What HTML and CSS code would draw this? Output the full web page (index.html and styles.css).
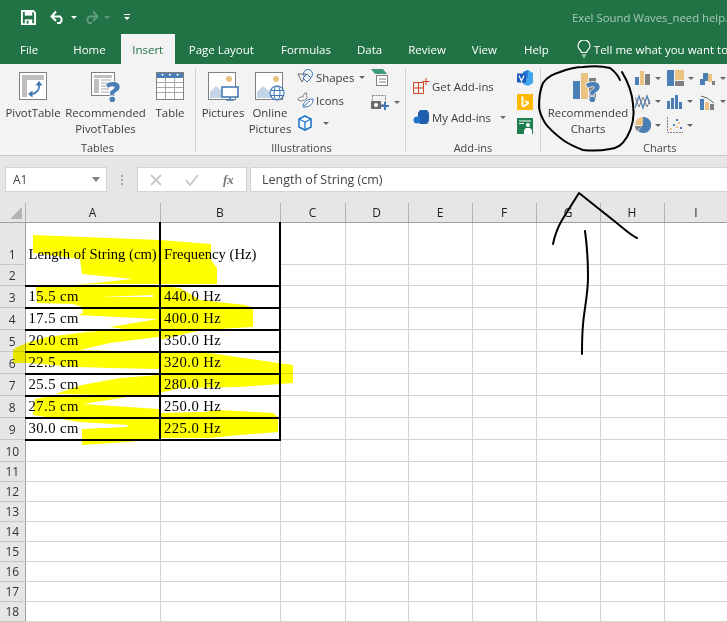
FILE: index.html
```html
<!DOCTYPE html>
<html lang="en">
<head>
<meta charset="utf-8">
<title>Exel Sound Waves_need help</title>
<link rel="stylesheet" href="styles.css">
</head>
<body>
<div class="app">
  <header class="titlebar">
    <svg class="qa-save" width="15" height="15" viewBox="0 0 16 16"><path d="M1 1h12l2 2v12H1z" fill="none" stroke="#fff" stroke-width="2"/><rect x="4" y="1" width="8" height="5" fill="#fff"/><rect x="4" y="10" width="8" height="5" fill="#fff"/><rect x="6" y="11.5" width="2" height="3" fill="#217346"/></svg>
    <svg class="qa-undo" width="16" height="14" viewBox="0 0 16 14"><path d="M2 6.500h8a4 4 0 0 1 0 6.500H7M6 1.500L1.500 6.500l4.500 4.500" fill="none" stroke="#fff" stroke-width="2"/></svg>
    <span class="qa-caret"></span>
    <svg class="qa-redo" width="16" height="14" viewBox="0 0 16 14"><path d="M14 6.500H6a4 4 0 0 0 0 6.500h3M10 1.500l4.500 5-4.500 4.500" fill="none" stroke="#5f9c7c" stroke-width="2"/></svg>
    <span class="qa-caret qa-caret-dim"></span>
    <span class="qa-custom"></span>
    <span class="doc-title">Exel Sound Waves_need help.</span>
  </header>

  <nav class="tabs">
    <span class="tab tab-file">File</span>
    <span class="tab tab-home">Home</span>
    <span class="tab tab-active">Insert</span>
    <span class="tab tab-layout">Page Layout</span>
    <span class="tab tab-formulas">Formulas</span>
    <span class="tab tab-data">Data</span>
    <span class="tab tab-review">Review</span>
    <span class="tab tab-view">View</span>
    <span class="tab tab-help">Help</span>
    <svg class="bulb" width="14" height="18" viewBox="0 0 14 18"><path d="M4.500 12.500C4.300 10 1 9 1 6a6 6 0 0 1 12 0c0 3-3.300 4-3.500 6.500zM5 15h4M5.800 17h2.400" fill="none" stroke="#fff" stroke-width="1.200"/></svg>
    <span class="tab tell">Tell me what you want to do</span>
  </nav>

  <section class="ribbon">
    <div class="group group-tables">
      <div class="group-body">
        <div class="big big-pivot">
          <svg width="28" height="28" viewBox="0 0 28 28"><rect x=".5" y=".5" width="27" height="27" fill="#fff" stroke="#808080"/><rect x="3" y="3" width="22" height="5" fill="#bfbfbf"/><rect x="3" y="8" width="5" height="17" fill="#bfbfbf"/><path d="M20 13c1 4-2 8-7 9" fill="none" stroke="#3f76b5" stroke-width="1.700"/><path d="M20 9l-3.500 4.500h7zM9 22l4.500-3.500v7z" fill="#3f76b5"/></svg>
          <span>PivotTable</span>
        </div>
        <div class="big big-recpivot">
          <svg width="30" height="28" viewBox="0 0 30 28"><rect x=".5" y=".5" width="23" height="23" fill="#fff" stroke="#808080"/><rect x="3" y="3" width="18" height="3" fill="#bfbfbf"/><rect x="3" y="7" width="5" height="14" fill="#bfbfbf"/><path d="M10 8h10M10 11h10M10 14h9M10 17h8M10 20h8" stroke="#a6a6a6"/><text class="qmark" x="15" y="30">?</text></svg>
          <span>Recommended</span>
          <span>PivotTables</span>
        </div>
        <div class="big big-table">
          <svg width="28" height="28" viewBox="0 0 28 28"><rect x=".5" y=".5" width="27" height="27" fill="#fff" stroke="#808080"/><rect x="1" y="1" width="26" height="5" fill="#4a7eb5"/><path d="M5 2h3l-1.500 2zM12.500 2h3L14 4zM20 2h3l-1.500 2z" fill="#fff"/><path d="M1 10.500h26M1 15.500h26M1 20.500h26M9.500 6v21M18.500 6v21" stroke="#a6a6a6"/></svg>
          <span>Table</span>
        </div>
      </div>
      <div class="group-label">Tables</div>
    </div>
    <div class="sep"></div>

    <div class="group group-illus">
      <div class="group-body">
        <div class="big big-pic">
          <svg width="30" height="28" viewBox="0 0 30 28"><rect x=".5" y=".5" width="27" height="27" fill="#fff" stroke="#808080"/><circle cx="21" cy="7" r="3" fill="#eac282"/><path d="M2 26V20l6-6 6 5 5-3v10z" fill="#c5d5e8"/><rect x="14" y="15" width="16" height="10" fill="#fff" stroke="#3f76b5" stroke-width="1.500"/><path d="M22 25v3M18 28h8" stroke="#3f76b5" stroke-width="1.500"/></svg>
          <span>Pictures</span>
        </div>
        <div class="big big-online">
          <svg width="30" height="28" viewBox="0 0 30 28"><rect x=".5" y=".5" width="27" height="27" fill="#fff" stroke="#808080"/><circle cx="21" cy="7" r="3" fill="#eac282"/><path d="M2 26V20l6-6 6 5 5-3v10z" fill="#c5d5e8"/><circle cx="22" cy="21" r="7" fill="#fff" stroke="#3f76b5" stroke-width="1.200"/><ellipse cx="22" cy="21" rx="3" ry="7" fill="none" stroke="#3f76b5"/><path d="M15.500 18.500h13M15.500 23.500h13" stroke="#3f76b5"/></svg>
          <span>Online</span>
          <span>Pictures</span>
        </div>
        <div class="small-col col-shapes">
          <div class="small">
            <svg width="17" height="16" viewBox="0 0 17 16"><path d="M1 5h8l-4 8z" fill="none" stroke="#6b6b6b"/><circle cx="11" cy="5" r="4.500" fill="none" stroke="#3f76b5"/><path d="M10 5l4 4-4 4-4-4z" fill="#f3f3f3" stroke="#3f76b5"/></svg>
            <span>Shapes</span><i class="caret"></i>
          </div>
          <div class="small">
            <svg width="17" height="16" viewBox="0 0 17 16"><path d="M1 8c0-3 3-3 5-3 0-2 1-4 4-4-1 2 0 3 0 5-1 2-4 3-6 3z" fill="none" stroke="#808080"/><path d="M6 15c0-5 4-8 10-8 0 5-3 8-8 8z" fill="#fff" stroke="#3f76b5"/><path d="M7 14l6-5" stroke="#3f76b5"/></svg>
            <span>Icons</span>
          </div>
          <div class="small small-3d">
            <svg width="17" height="16" viewBox="0 0 17 16"><path d="M8 1l6 3v8l-6 3-6-3V4z" fill="#fff" stroke="#1f76c8" stroke-width="1.600"/><path d="M2 4l6 3 6-3M8 7v8" fill="none" stroke="#1f76c8" stroke-width="1.300"/></svg>
            <i class="caret caret-3d"></i>
          </div>
        </div>
        <div class="small-col col-art">
          <div class="small">
            <svg width="17" height="18" viewBox="0 0 17 18"><path d="M0 0h12l4 5H4z" fill="#3f9a78"/><rect x="5.500" y="6.500" width="11" height="10" fill="#fff" stroke="#808080"/><path d="M8 10h7M8 13h7" stroke="#808080"/></svg>
          </div>
          <div class="small small-shot">
            <svg width="18" height="16" viewBox="0 0 18 16"><rect x="1.500" y="1.500" width="13" height="9" fill="none" stroke="#808080" stroke-dasharray="2 1"/><rect x="0" y="7" width="10" height="8" fill="#6b6b6b"/><circle cx="5" cy="11" r="2" fill="#fff"/><path d="M14 8v8M10 12h8" stroke="#3f76b5" stroke-width="2"/></svg>
            <i class="caret"></i>
          </div>
        </div>
      </div>
      <div class="group-label group-label-illus">Illustrations</div>
    </div>
    <div class="sep"></div>

    <div class="group group-addins">
      <div class="group-body">
        <div class="addin-col">
          <div class="small">
            <svg width="17" height="16" viewBox="0 0 17 16"><path d="M.5 4.500h10v11H.5zM.5 10h10M5.500 4.500v11M13 0v7M9.500 3.500h7" fill="none" stroke="#d04423"/></svg>
            <span>Get Add-ins</span>
          </div>
          <div class="small">
            <svg width="17" height="16" viewBox="0 0 17 16"><path d="M7 1h7l2 3v8l-2 3H7l-2-3V4z" fill="#1f5fae"/><circle cx="4" cy="11" r="3.500" fill="#1f76c8"/></svg>
            <span>My Add-ins</span><i class="caret caret-my"></i>
          </div>
        </div>
        <div class="small-col col-store">
          <div class="small">
            <svg width="16" height="16" viewBox="0 0 16 16"><path d="M6 2l5-2 5 3v10l-5 3-5-2z" fill="#41a5ee"/><path d="M6 2l5-2v8H6z" fill="#2b7cd3"/><rect y="3.500" width="9" height="9" fill="#185abd"/><path d="M2 5.500l2.500 5.500 2.500-5.500" fill="none" stroke="#fff" stroke-width="1.200"/></svg>
          </div>
          <div class="small">
            <svg width="16" height="16" viewBox="0 0 16 16"><rect width="16" height="16" fill="#ffb900"/><path d="M4.500 2v10l2 1.500 5.500-3.500v-2L7.500 6l1 2.500 1.500.7-3.500 2V3z" fill="#fff"/></svg>
          </div>
          <div class="small">
            <svg width="16" height="16" viewBox="0 0 16 16"><rect width="16" height="16" fill="#1d7f50"/><path d="M2 3h12M2 5.500h5" stroke="#fff"/><circle cx="11" cy="7" r="2" fill="#fff"/><path d="M7 16v-4l2-2h4l2 2v4z" fill="#fff"/></svg>
          </div>
        </div>
      </div>
      <div class="group-label group-label-addins">Add-ins</div>
    </div>
    <div class="sep"></div>

    <div class="group group-charts">
      <div class="group-body">
        <div class="big big-recchart">
          <svg width="30" height="28" viewBox="0 0 30 28"><rect x="0" y="9" width="7" height="18" fill="#4a7eb5"/><rect x="8" y="1" width="7" height="26" fill="#eac282"/><rect x="16" y="6" width="7" height="21" fill="#808080"/><text class="qmark" x="13" y="30">?</text></svg>
          <span>Recommended</span>
          <span>Charts</span>
        </div>
        <div class="chart-grid">
          <div class="small"><svg width="16" height="16" viewBox="0 0 16 16"><rect y="7" width="4" height="8" fill="#4a7eb5"/><rect x="5" y="1" width="4" height="14" fill="#eac282"/><rect x="10" y="4" width="5" height="11" fill="#808080"/></svg><i class="caret"></i></div>
          <div class="small"><svg width="17" height="16" viewBox="0 0 17 16"><rect width="7" height="16" fill="#4a7eb5"/><rect x="8" width="9" height="10" fill="#eac282"/><rect x="8" y="11" width="9" height="5" fill="#808080"/></svg><i class="caret"></i></div>
          <div class="small"><svg width="16" height="16" viewBox="0 0 16 16"><path d="M0 15V9h3V3h5v8H5v4z" fill="#4a7eb5"/><rect x="8" y="4" width="4" height="8" fill="#eac282"/><rect x="12" y="11" width="3" height="4" fill="#808080"/></svg><i class="caret"></i></div>
          <div class="small"><svg width="16" height="16" viewBox="0 0 16 16"><path d="M0 14L4 2l4 12 4-12 3 8" fill="none" stroke="#4a7eb5" stroke-width="1.300"/><path d="M0 3l4 10 4-10 4 10 3-7" fill="none" stroke="#808080"/></svg><i class="caret"></i></div>
          <div class="small"><svg width="16" height="16" viewBox="0 0 16 16"><rect y="7" width="3" height="8" fill="#4a7eb5"/><rect x="4" y="4" width="3" height="11" fill="#4a7eb5"/><rect x="8" y="1" width="3" height="14" fill="#4a7eb5"/><rect x="12" y="8" width="3" height="7" fill="#4a7eb5"/></svg><i class="caret"></i></div>
          <div class="small"><svg width="16" height="16" viewBox="0 0 16 16"><rect y="5" width="4" height="11" fill="#4a7eb5"/><rect x="5" y="8" width="4" height="8" fill="#eac282"/><rect x="10" y="10" width="4" height="6" fill="#808080"/><path d="M1 2l6 2 7 5" fill="none" stroke="#666"/></svg><i class="caret"></i></div>
          <div class="small"><svg width="16" height="16" viewBox="0 0 16 16"><path d="M8 0a8 8 0 1 1-5 14l5-6z" fill="#4a7eb5"/><path d="M8 0v8H0a8 8 0 0 1 8-8z" fill="#eac282"/><path d="M0 9h7l-5 5a8 8 0 0 1-2-5z" fill="#808080"/></svg><i class="caret"></i></div>
          <div class="small"><svg width="16" height="16" viewBox="0 0 16 16"><path d="M.5 0v15.500H16" fill="none" stroke="#808080" stroke-dasharray="2 1"/><path d="M3 11h2v2H3zM9 9h2v2H9zM11 5h2v2h-2z" fill="#eac282"/><path d="M6 7h2v2H6zM9 2h2v2H9zM13 10h2v2h-2z" fill="#4a7eb5"/></svg><i class="caret"></i></div>
        </div>
      </div>
      <div class="group-label group-label-charts">Charts</div>
    </div>
  </section>

  <section class="formula-area">
    <div class="namebox"><span>A1</span><i class="caret caret-name"></i></div>
    <div class="dots"></div>
    <div class="fxbox">
      <svg width="14" height="14" viewBox="0 0 14 14"><path d="M2 2l10 10M12 2L2 12" stroke="#c8c8c8" stroke-width="1.800"/></svg>
      <svg width="14" height="14" viewBox="0 0 14 14"><path d="M1 7l4 5 8-10" fill="none" stroke="#c8c8c8" stroke-width="1.800"/></svg>
      <span class="fx">fx</span>
    </div>
    <div class="formula">Length of String (cm)</div>
  </section>

  <table class="sheet">
    <colgroup>
      <col class="c-h"><col class="c-a"><col class="c-b"><col class="c-c"><col class="c-d"><col class="c-n"><col class="c-n"><col class="c-n"><col class="c-n"><col class="c-n">
    </colgroup>
    <thead>
      <tr>
        <th class="corner"><svg width="25" height="19" viewBox="0 0 25 19"><path d="M22 4v12H10z" fill="#b4b4b4"/></svg></th>
        <th>A</th><th>B</th><th>C</th><th>D</th><th>E</th><th>F</th><th>G</th><th>H</th><th>I</th>
      </tr>
    </thead>
    <tbody>
      <tr class="r-1"><th>1</th><td class="k-r k-o">Length of String (cm)</td><td class="k-r k-o">Frequency (Hz)</td><td></td><td></td><td></td><td></td><td></td><td></td><td></td></tr>
      <tr class="r-2"><th>2</th><td class="k-r k-b"></td><td class="k-r k-b"></td><td></td><td></td><td></td><td></td><td></td><td></td><td></td></tr>
      <tr class="r-3"><th>3</th><td class="k-r k-b num">15.5 cm</td><td class="k-r k-b num">440.0 Hz</td><td></td><td></td><td></td><td></td><td></td><td></td><td></td></tr>
      <tr class="r-3"><th>4</th><td class="k-r k-b num">17.5 cm</td><td class="k-r k-b num">400.0 Hz</td><td></td><td></td><td></td><td></td><td></td><td></td><td></td></tr>
      <tr class="r-3"><th>5</th><td class="k-r k-b num">20.0 cm</td><td class="k-r k-b num">350.0 Hz</td><td></td><td></td><td></td><td></td><td></td><td></td><td></td></tr>
      <tr class="r-3"><th>6</th><td class="k-r k-b num">22.5 cm</td><td class="k-r k-b num">320.0 Hz</td><td></td><td></td><td></td><td></td><td></td><td></td><td></td></tr>
      <tr class="r-3"><th>7</th><td class="k-r k-b num">25.5 cm</td><td class="k-r k-b num">280.0 Hz</td><td></td><td></td><td></td><td></td><td></td><td></td><td></td></tr>
      <tr class="r-3"><th>8</th><td class="k-r k-b num">27.5 cm</td><td class="k-r k-b num">250.0 Hz</td><td></td><td></td><td></td><td></td><td></td><td></td><td></td></tr>
      <tr class="r-3"><th>9</th><td class="k-r k-b num">30.0 cm</td><td class="k-r k-b num">225.0 Hz</td><td></td><td></td><td></td><td></td><td></td><td></td><td></td></tr>
      <tr class="r-3"><th>10</th><td></td><td></td><td></td><td></td><td></td><td></td><td></td><td></td><td></td></tr>
      <tr class="r-n"><th>11</th><td></td><td></td><td></td><td></td><td></td><td></td><td></td><td></td><td></td></tr>
      <tr class="r-n"><th>12</th><td></td><td></td><td></td><td></td><td></td><td></td><td></td><td></td><td></td></tr>
      <tr class="r-n"><th>13</th><td></td><td></td><td></td><td></td><td></td><td></td><td></td><td></td><td></td></tr>
      <tr class="r-n"><th>14</th><td></td><td></td><td></td><td></td><td></td><td></td><td></td><td></td><td></td></tr>
      <tr class="r-n"><th>15</th><td></td><td></td><td></td><td></td><td></td><td></td><td></td><td></td><td></td></tr>
      <tr class="r-n"><th>16</th><td></td><td></td><td></td><td></td><td></td><td></td><td></td><td></td><td></td></tr>
      <tr class="r-n"><th>17</th><td></td><td></td><td></td><td></td><td></td><td></td><td></td><td></td><td></td></tr>
      <tr class="r-n"><th>18</th><td></td><td></td><td></td><td></td><td></td><td></td><td></td><td></td><td></td></tr>
    </tbody>
  </table>

  <svg class="marker marker-yellow" width="727" height="622" viewBox="0 0 727 622">
    <path d="M33 235L160 240 211 244 211 260 217 268 217 284 100 284 75 285 133 279 82 274 80 259 33 253Z"/>
    <path fill-rule="evenodd" d="M36 287L160 286 180 288 200 300 245 305 253 308 253 327 203 330 180 335 160 340 158 337 110 343 80 350 160 352 210 353 278 363 293 365 293 383 280 384 240 387 180 388 160 393 160 396 55 394 82 385 120 378 158 375 160 371 158 369 110 368 78 367 28 363 13 363 13 350 17 347 27 343 47 337 87 332 123 329 110 327 158 319 78 315 83 313 82 307 73 304 37 303ZM100 297L153 295 153 297Z"/>
    <path d="M35 399L50 396 77 395 127 397 83 404 158 409 160 413 203 412 220 410 273 413 278 417 278 432 240 435 210 438 160 438 158 439 127 442 82 445 82 429 127 427 128 425 80 422 33 415Z"/>
  </svg>
  <svg class="marker marker-ink" width="727" height="622" viewBox="0 0 727 622">
    <path d="M622 72C628 82 632 92 633 104 635 118 631 130 627 137 622 145 618 148 610 149 600 151 592 151 583 150 575 147 570 145 563 140 555 134 550 130 545 123 541 116 539 112 539 106 539 96 540 90 543 83 548 76 554 74 560 72 568 69 575 67 583 67 593 66 602 66 610 68 614 71 618 75 620 80"/>
    <path d="M553 244C555 234 558 227 562 220L579 193 613 220C622 227 630 235 637 238"/>
    <path d="M585 231C587 245 588 262 588 277 588 295 584 310 583 325 582 335 582 345 582 354"/>
  </svg>
</div>
</body>
</html>
```

FILE: styles.css
```css
* { box-sizing: border-box; }
html, body { margin: 0; padding: 0; }
body { width: 727px; height: 622px; overflow: hidden; font-family: "Open Sans", "Liberation Sans", sans-serif; color: #333; background: #fff; }
.app { position: relative; width: 727px; height: 622px; overflow: hidden; }

.titlebar { height: 34px; background: #217346; display: flex; align-items: center; padding-left: 21px; }
.titlebar > * { flex: none; }
.qa-undo { margin-left: 14px; }
.qa-caret { width: 0; height: 0; margin-left: 5px; border: 3px solid transparent; border-top: 3px solid #fff; border-bottom: 0; }
.qa-redo { margin-left: 6px; }
.qa-caret-dim { border-top-color: #5f9c7c; }
.qa-custom { width: 6px; height: 6px; margin-left: 14px; border-top: 1px solid #fff; position: relative; }
.qa-custom::after { content: ""; position: absolute; left: 0; top: 2px; border: 3px solid transparent; border-top: 3px solid #fff; border-bottom: 0; }
.doc-title { margin-left: 442px; color: #a8c9b6; font-size: 11.350px; white-space: nowrap; }

.tabs { height: 30px; background: #217346; display: flex; align-items: center; color: #fff; font-size: 11.500px; white-space: nowrap; overflow: hidden; }
.tabs > * { flex: none; }
.tab { display: flex; align-items: center; height: 30px; }
.tab-file { margin-left: 20px; }
.tab-home { margin-left: 35px; }
.tab-active { margin-left: 15px; width: 54px; justify-content: center; background: #f3f3f3; color: #217346; }
.tab-layout { margin-left: 14px; }
.tab-formulas { margin-left: 27px; }
.tab-data { margin-left: 26px; }
.tab-review { margin-left: 26px; }
.tab-view { margin-left: 26px; }
.tab-help { margin-left: 27px; }
.bulb { margin-left: 28px; }
.tell { margin-left: 3px; }

.ribbon { height: 92px; background: #f3f3f3; border-bottom: 1px solid #c8c8c8; display: flex; font-size: 11.400px; color: #3b3b3b; }
.group { display: flex; flex-direction: column; height: 91px; padding-top: 6px; flex: none; }
.group-body { display: flex; flex: 1; min-height: 0; }
.group-label { height: 15px; line-height: 15px; text-align: center; font-size: 11px; color: #444; white-space: nowrap; }
.sep { width: 1px; margin: 4px 0 3px; background: #d2d2d2; flex: none; }
.group-tables { width: 195px; }
.group-illus { width: 209px; }
.group-addins { width: 134px; }
.group-charts { width: 186px; }
.group-label-illus { padding-left: 2px; }
.group-label-charts { text-align: left; padding-left: 102px; }

.big { display: flex; flex-direction: column; align-items: center; padding-top: 2px; line-height: 16px; white-space: nowrap; flex: none; }
.big svg { margin-bottom: 5px; overflow: visible; }
.big-pivot { width: 54px; margin-left: 6px; }
.big-recpivot { width: 81px; margin-left: 5px; }
.big-table { width: 28px; margin-left: 10px; }
.big-pic { width: 42px; margin-left: 6px; }
.big-online { width: 42px; margin-left: 5px; }
.big-recchart { width: 82px; margin-left: 6px; }

.small-col { display: flex; flex-direction: column; gap: 8px; flex: none; }
.small { display: flex; align-items: center; height: 16px; white-space: nowrap; flex: none; }
.small svg { flex: none; }
.small span { margin-left: 2px; }
.col-shapes { width: 74px; margin: -1px 0 0 6px; gap: 7px; }
.col-art { width: 30px; }
.caret { display: inline-block; width: 0; height: 0; margin-left: 5px; border: 3px solid transparent; border-top: 3px solid #666; border-bottom: 0; }
.caret-3d { margin-left: 9px; }
.caret-my { margin-left: 9px; }

.addin-col { display: flex; flex-direction: column; gap: 15px; margin: 8px 0 0 7px; width: 104px; flex: none; }

.chart-grid { display: grid; grid-template-columns: 32px 33px 30px; row-gap: 7.500px; align-content: start; margin-left: 6px; flex: none; }
.chart-grid .caret { margin-left: 4px; }

.qmark { font-family: "Open Sans", sans-serif; font-weight: 800; font-size: 28px; fill: #4a7eb5; stroke: #f3f3f3; stroke-width: 1.500px; paint-order: stroke; }

.formula-area { height: 47px; background: #e6e6e6; display: flex; padding: 11px 0 0 5px; align-items: flex-start; }
.namebox { width: 102px; height: 25px; background: #fff; border: 1px solid #d4d4d4; display: flex; align-items: center; justify-content: space-between; padding: 0 6px 0 7px; font-size: 12px; color: #444; }
.caret-name { border-width: 4px; border-top: 5px solid #808080; border-bottom: 0; }
.dots { width: 2px; height: 10px; margin: 8px 14px 0 14px; background: repeating-linear-gradient(#a8a8a8 0 2px, transparent 2px 4px); }
.fxbox { width: 110px; height: 25px; background: #fff; border: 1px solid #d4d4d4; display: flex; align-items: center; gap: 22px; padding-left: 11px; }
.fx { font-family: "Liberation Serif", serif; font-style: italic; font-weight: 700; font-size: 13px; color: #777; margin-left: 2px; }
.formula { flex: 1; height: 25px; margin-left: 3px; background: #fff; border: 1px solid #d4d4d4; border-right: 0; padding-left: 11px; line-height: 23px; font-size: 12.500px; color: #444; white-space: nowrap; }

.sheet { border-collapse: collapse; table-layout: fixed; width: 728px; font-family: "Liberation Serif", serif; font-size: 14.670px; color: #000; }
.c-h { width: 25px; }
.c-a { width: 135px; }
.c-b { width: 120px; }
.c-c { width: 65px; }
.c-d { width: 63px; }
.c-n { width: 64px; }
.sheet thead tr { height: 19px; }
.sheet thead th { background: #e6e6e6; border-right: 1px solid #b4b4b4; border-bottom: 1px solid #9f9f9f; padding: 0; font: 400 12px/18px "Open Sans", sans-serif; color: #222; }
.sheet .corner { line-height: 0; vertical-align: top; }
.sheet tbody th { background: #e6e6e6; border-right: 1px solid #9f9f9f; border-bottom: 1px solid #c6c6c6; padding: 0 0 1px; font: 400 12px/17px "Open Sans", sans-serif; color: #333; vertical-align: bottom; text-align: center; }
.sheet td { border-right: 1px solid #d4d4d4; border-bottom: 1px solid #d4d4d4; padding: 0 0 2px 3px; line-height: 17px; white-space: nowrap; vertical-align: bottom; overflow: hidden; }
.sheet td.k-r { border-right: 2px solid #000; }
.sheet td.k-b { border-bottom: 2px solid #000; }
.sheet td.k-o { border-bottom: 0; }
.sheet td.num { letter-spacing: .45px; }
.r-1 { height: 42px; }
.r-2 { height: 21px; }
.r-3 { height: 22px; }
.r-n { height: 20px; }

.marker { position: absolute; left: 0; top: 0; pointer-events: none; }
.marker-yellow { mix-blend-mode: multiply; fill: #ffff00; }
.marker-ink { fill: none; stroke: #000; stroke-width: 2px; stroke-linecap: round; stroke-linejoin: round; }
```
